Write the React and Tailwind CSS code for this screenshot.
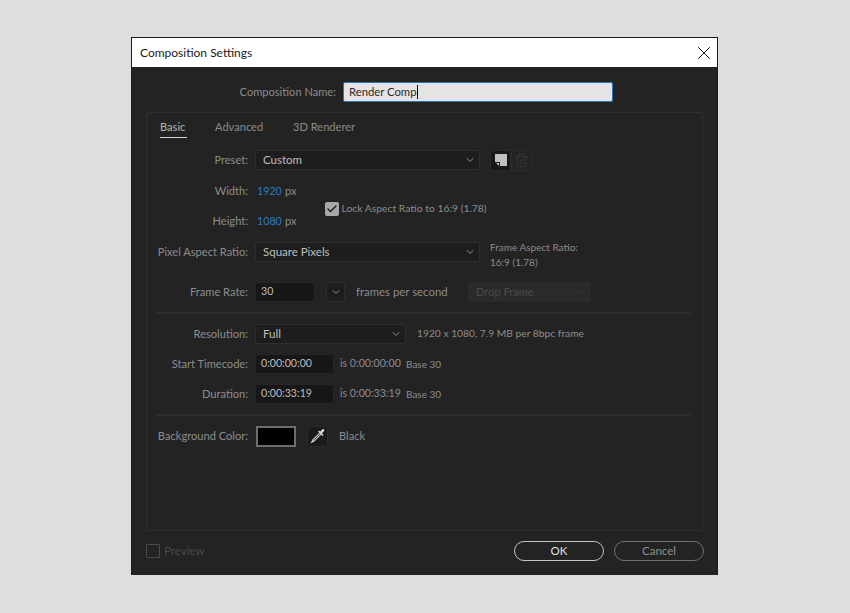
import { ChevronDown, Check, X, Trash2 } from 'lucide-react';

const font = 'font-["Lato",sans-serif]';

function Label({ children }) {
  return <div className="w-[101px] shrink-0 text-right text-[11.1px] text-[#8c8c8c] mr-[7px] whitespace-nowrap">{children}</div>;
}

function Select({ value, width }) {
  return (
    <div className={`${width} h-[20px] shrink-0 flex items-center justify-between pl-[7px] pr-[3px] bg-[#1d1d1d] border border-[#2e2e2e] rounded-[2px] text-[11.5px] text-[#bdbdbd]`}>
      <span>{value}</span>
      <ChevronDown size={12} strokeWidth={1.5} className="text-[#b5b5b5]" />
    </div>
  );
}

function Field({ value, width }) {
  return (
    <div className={`${width} h-[20px] shrink-0 flex items-center pl-[5px] bg-[#171717] border border-[#262626] rounded-[2px] text-[10.6px] text-[#bdbdbd]`}>
      {value}
    </div>
  );
}

function Row({ label, className = '', children }) {
  return (
    <div className={`flex items-center h-[20px] ${className}`}>
      <Label>{label}</Label>
      {children}
    </div>
  );
}

export default function App() {
  return (
    <div className={`h-[613px] bg-[#dedede] pl-[131px] pt-[37px] ${font}`}>
      <div className="w-[587px] h-[538px] bg-[#232323] border-t border-x border-[#1a1a1a] flex flex-col">
        {/* Title bar */}
        <div className="h-[29px] shrink-0 bg-white flex items-center justify-between pl-[8px] pr-[2px]">
          <span className="text-[12px] leading-[16px] pt-[1px] text-[#1a1a1a]">Composition Settings</span>
          <X size={22} strokeWidth={1} className="text-black" />
        </div>

        {/* Name */}
        <div className="flex items-center h-[20px] mt-[15px]">
          <div className="w-[204px] shrink-0 text-right text-[11.1px] text-[#8c8c8c] mr-[7px]">Composition Name:</div>
          <div className="w-[270px] h-[20px] flex items-center pl-[5px] bg-[#e4e4e4] border border-[#2c76bd] rounded-[2px] text-[11.3px] text-[#2a2a2a]">
            Render Comp<span className="w-px h-[14px] bg-black" />
          </div>
        </div>

        {/* Main panel */}
        <div className="ml-[14px] mr-[14px] mt-[10px] h-[419px] border border-[#2f2f2f] rounded-[2px] flex flex-col">
          <div className="flex h-[27px] text-[11.1px] text-[#8a8a8a] pl-[13px]">
            <div className="w-[55px] h-[25px]">
              <div className="w-[27px] h-[25px] leading-[27px] text-[#b4b4b4] border-b border-[#d0d0d0]">Basic</div>
            </div>
            <span className="w-[78px] leading-[27px]">Advanced</span>
            <span className="leading-[27px]">3D Renderer</span>
          </div>

          <Row label="Preset:" className="mt-[10px]">
            <Select value="Custom" width="w-[225px]" />
            <div className="ml-[10px] w-[21px] h-[21px] bg-[#181818] border border-[#2a2a2a] rounded-[2px] flex items-center justify-center">
              <svg width="12" height="12" viewBox="0 0 12 12">
                <path d="M0 0H12V12H5V8H0Z" fill="#c0c0c0" />
                <path d="M1 9H4V12Z" fill="#c0c0c0" />
              </svg>
            </div>
            <div className="w-[21px] h-[21px] border border-[#2c2c2c] rounded-[2px] flex items-center justify-center">
              <Trash2 size={15} strokeWidth={1} className="text-[#444444]" />
            </div>
          </Row>

          <div className="flex mt-[11px]">
            <div className="flex flex-col gap-[10px]">
              <Row label="Width:">
                <span className="ml-[2px] text-[10.7px] text-[#2f78c4] w-[28px]">1920</span>
                <span className="text-[11.1px] text-[#8c8c8c]">px</span>
              </Row>
              <Row label="Height:">
                <span className="ml-[2px] text-[10.7px] text-[#2f78c4] w-[28px]">1080</span>
                <span className="text-[11.1px] text-[#8c8c8c]">px</span>
              </Row>
            </div>
            <div className="flex items-center ml-[28px] pt-[6px]">
              <div className="w-[14px] h-[14px] bg-[#a8a8a8] rounded-[2px] flex items-center justify-center">
                <Check size={12} strokeWidth={3} className="text-[#222222]" />
              </div>
              <span className="ml-[3px] text-[10.35px] text-[#8c8c8c]">Lock Aspect Ratio to 16:9 (1.78)</span>
            </div>
          </div>

          <Row label="Pixel Aspect Ratio:" className="mt-[11px]">
            <Select value="Square Pixels" width="w-[225px]" />
            <div className="ml-[10px] text-[10px] leading-[15px] text-[#8c8c8c] pt-[6px]">
              Frame Aspect Ratio:
              <br />
              16:9 (1.78)
            </div>
          </Row>

          <Row label="Frame Rate:" className="mt-[20px]">
            <Field value="30" width="w-[60px]" />
            <div className="ml-[11px] w-[19px] h-[20px] bg-[#1d1d1d] border border-[#2e2e2e] rounded-[2px] flex items-center justify-center">
              <ChevronDown size={12} strokeWidth={1.5} className="text-[#b5b5b5]" />
            </div>
            <span className="ml-[11px] w-[112px] text-[11.4px] text-[#8c8c8c]">frames per second</span>
            <div className="w-[123px] h-[20px] bg-[#2a2a2a] rounded-[2px] flex items-center justify-between pl-[8px] pr-[4px] text-[11.1px] text-[#4a4a4a]">
              Drop Frame
              <ChevronDown size={12} strokeWidth={1.5} className="text-[#404040]" />
            </div>
          </Row>

          <div className="ml-[9px] mr-[12px] h-[2px] bg-[#2e2e2e] mt-[10px]" />

          <Row label="Resolution:" className="mt-[10px]">
            <Select value="Full" width="w-[151px]" />
            <span className="ml-[11px] text-[10.25px] text-[#8c8c8c]">1920 x 1080, 7.9 MB per 8bpc frame</span>
          </Row>

          <Row label="Start Timecode:" className="mt-[10px]">
            <Field value="0:00:00:00" width="w-[79px]" />
            <span className="ml-[6px] text-[10.6px] text-[#8c8c8c] w-[66px]">is 0:00:00:00</span>
            <span className="text-[10px] text-[#8c8c8c]">Base 30</span>
          </Row>

          <Row label="Duration:" className="mt-[10px]">
            <Field value="0:00:33:19" width="w-[79px]" />
            <span className="ml-[6px] text-[10.6px] text-[#8c8c8c] w-[66px]">is 0:00:33:19</span>
            <span className="text-[10px] text-[#8c8c8c]">Base 30</span>
          </Row>

          <div className="ml-[9px] mr-[12px] h-[2px] bg-[#2e2e2e] mt-[10px]" />

          <Row label="Background Color:" className="mt-[10px]">
            <div className="ml-px w-[40px] h-[21px] bg-black border-2 border-[#6e6e6e] shrink-0" />
            <div className="ml-[11px] w-[21px] h-[21px] bg-[#1b1b1b] border border-[#2a2a2a] rounded-[2px] flex items-center justify-center">
              <svg width="18" height="18" viewBox="0 0 16 16" fill="none">
                <path d="M9.5 5.5L3.5 11.5L2.5 13.5L4.5 12.5L10.5 6.5" stroke="#d0d0d0" strokeWidth="1" />
                <path d="M8 4L12 8L13 7L11.5 5.5L13.5 3.5C14 2.5 13 1.5 12 2L10 4L9 3Z" fill="#d8d8d8" />
              </svg>
            </div>
            <span className="ml-[11px] text-[11.1px] text-[#8c8c8c]">Black</span>
          </Row>
        </div>

        {/* Footer */}
        <div className="flex items-center justify-between mt-[10px] pl-[14px] pr-[13px] h-[20px]">
          <div className="flex items-center">
            <div className="w-[14px] h-[14px] border border-[#4a4a4a] rounded-[1px]" />
            <span className="ml-[4px] text-[11.5px] text-[#4a4a4a]">Preview</span>
          </div>
          <div className="flex gap-[10px]">
            <div className="w-[90px] h-[20px] rounded-full border border-[#c4c4c4] flex items-center justify-center text-[11.5px] text-[#e0e0e0]">OK</div>
            <div className="w-[90px] h-[20px] rounded-full border border-[#707070] flex items-center justify-center text-[11.5px] text-[#8f8f8f]">Cancel</div>
          </div>
        </div>
      </div>
    </div>
  );
}
